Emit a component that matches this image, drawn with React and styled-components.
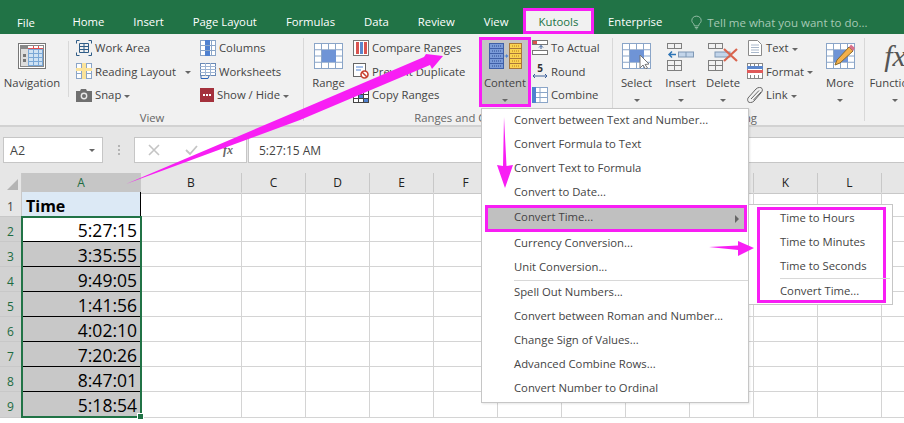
import React from "react";
import styled, { createGlobalStyle } from "styled-components";

const Global = createGlobalStyle`
  html, body { margin: 0; padding: 0; background: #fff; }
  body { font-family: "Open Sans", "Noto Sans", sans-serif; }
  * { box-sizing: border-box; }
`;
const MAG = "#f81ef4";
const Page = styled.div`
  position: relative; width: 904px; height: 423px; overflow: hidden;
  font-size: 11.3px; color: #444; background: #fff;
`;
const TabBar = styled.div`
  height: 34px; background: #217346; display: flex; align-items: flex-end; color: #fff; white-space: nowrap;
`;
const Tab = styled.div`
  height: 26px; line-height: 28px; padding: 0 ${p => p.$pad ?? 14.5}px; font-size: 11.3px; flex: none;
  width: ${p => p.$w ? `${p.$w}px` : "auto"};
  ${p => p.$active && `background:#f1f1f1;color:#217346;outline:3px solid ${MAG};outline-offset:-3px;margin-right:14px;text-align:center;`}
`;
const FileTab = styled(Tab)` padding: 0 23px 0 17px; line-height: 30px; `;
const TellMe = styled.div`
  display: flex; align-items: center; gap: 5px; height: 26px; margin-left: 29px; color: #a6c9b5; font-size: 11.5px; padding-top: 2px;
`;
const Ribbon = styled.div`
  height: 93px; background: #f1f1f1; border-bottom: 2px solid #d2d2d2; display: flex;
`;
const Group = styled.div`
  position: relative; flex: none; width: ${p => p.$w}px; height: 91px; display: flex; flex-direction: column;
  &::after { content: ""; position: absolute; right: 0; top: 4px; height: 83px; width: 1px; background: ${p => p.$noline ? "transparent" : "#d8d8d8"}; }
`;
const GroupBody = styled.div`
  height: 76px; padding-top: 3px; display: flex; flex: none;
`;
const GroupLabel = styled.div`
  text-align: center; font-size: 11.3px; line-height: 15px; color: #666; white-space: nowrap;
`;
const Large = styled.div`
  flex: none; width: ${p => p.$w}px; height: 70px; display: flex; flex-direction: column; align-items: center; position: relative;
  margin-right: ${p => p.$mr ?? 0}px; white-space: nowrap; color: #444;
  ${p => p.$hot && `background:#c4c4c4;outline:3px solid ${MAG};outline-offset:-3px;`}
`;
const LargeIcon = styled.div`
  height: 34px; padding-top: 6px; display: flex; justify-content: center; align-items: flex-start;
`;
const LargeText = styled.div` line-height: 24px; height: 24px; `;
const Caret = styled.span`
  display: inline-block; width: 0; height: 0; border-left: 3px solid transparent; border-right: 3px solid transparent; border-top: 3px solid #666;
  margin-left: ${p => p.$ml ?? 3}px; vertical-align: middle;
`;
const LargeCaret = styled(Caret)` margin: 4px 0 0; `;
const Divider = styled.div` width: 1px; height: 56px; margin: 4px 7px 0 0; background: #d8d8d8; flex: none; `;
const Col = styled.div`
  flex: none; width: ${p => p.$w}px; display: flex; flex-direction: column; margin-top: -1px;
`;
const Small = styled.div`
  height: 23.5px; display: flex; align-items: center; gap: 3px; white-space: nowrap;
  svg { flex: none; }
`;
const FormulaBar = styled.div`
  height: 46px; background: #e6e6e6; display: flex; padding: 10px 0 10px 3px; align-items: stretch;
`;
const NameBox = styled.div`
  width: 100px; background: #fff; border: 1px solid #c6c6c6; display: flex; align-items: center; justify-content: space-between;
  padding: 0 7px 0 6px; font-size: 12.5px; color: #444;
`;
const Dots = styled.div`
  width: 31px; display: flex; flex-direction: column; align-items: center; justify-content: center; gap: 2px;
  i { width: 2px; height: 2px; background: #b4b4b4; display: block; }
`;
const FxBox = styled.div`
  width: 113px; background: #fff; border: 1px solid #c6c6c6; display: flex; align-items: center; gap: 25px; padding: 0 0 0 13px;
  color: #666; font-family: "Liberation Serif", serif; font-style: italic; font-weight: 700; font-size: 12px; margin-right: 1px;
`;
const FormulaInput = styled.div`
  flex: 1; background: #fff; border: 1px solid #c6c6c6; border-right: 0; padding-left: 10px; line-height: 26px; font-size: 12px; color: #444;
`;
const Sheet = styled.div` position: relative; `;
const columns = "22px 119px 101px repeat(11, 64px)";
const ColHeaders = styled.div`
  display: grid; grid-template-columns: ${columns}; height: 19px; background: #e6e6e6;
`;
const ColHead = styled.div`
  text-align: center; line-height: 19px; font-size: 12px; color: ${p => p.$on ? "#1d6b41" : "#222"};
  background: ${p => p.$on ? "#c6c6c6" : "#e6e6e6"}; border-right: 1px solid #c8c8c8;
  border-bottom: ${p => p.$on ? "2px solid #217346" : "1px solid #c8c8c8"};
`;
const Corner = styled.div`
  border-right: 1px solid #c8c8c8; border-bottom: 1px solid #c8c8c8; position: relative; background: #e6e6e6;
  &::after { content: ""; position: absolute; right: 3px; bottom: 3px; border-left: 11px solid transparent; border-bottom: 11px solid #b4b4b4; }
`;
const Rows = styled.div` position: relative; `;
const Row = styled.div`
  display: grid; grid-template-columns: ${columns}; grid-template-rows: ${p => p.$h}px; height: ${p => p.$h}px;
`;
const RowHead = styled.div`
  text-align: center; line-height: 29px; height: 100%; overflow: hidden; font-size: 12px; color: ${p => p.$on ? "#1d6b41" : "#444"};
  background: ${p => p.$on ? "#d2d2d2" : "#e6e6e6"}; border-right: 1px solid #c8c8c8; border-bottom: 1px solid #c8c8c8;
`;
const Cell = styled.div`
  border-right: 1px solid #d4d4d4; border-bottom: 1px solid #d4d4d4;
`;
const DataCell = styled.div`
  background: ${p => p.$bg}; border-right: 1px solid #000; border-bottom: 1px solid #000; overflow: hidden;
  font-size: ${p => p.$head ? 16 : 17.5}px; line-height: 21px; color: #000; white-space: nowrap;
  text-align: ${p => p.$head ? "left" : "right"}; font-weight: ${p => p.$head ? 700 : 400};
  padding: ${p => p.$head ? "4px 0 0 4px" : "3px 3px 0 0"};
`;
const Selection = styled.div`
  position: absolute; left: 21px; top: 24px; width: 121px; height: 202px; border: 2px solid #217346; pointer-events: none;
`;
const Handle = styled.div`
  position: absolute; right: -4px; bottom: -4px; width: 7px; height: 7px; background: #217346; border: 1px solid #fff;
`;
const Menu = styled.div`
  position: absolute; left: 481px; top: 108px; width: 268px; height: 295px; background: #fff; border: 1px solid #c6c6c6; z-index: 3;
  box-shadow: 1px 1px 2px rgba(0,0,0,.1);
`;
const MenuItem = styled.div`
  height: ${p => p.$hot ? 27 : 24}px; line-height: ${p => p.$hot ? 24 : 22}px; padding-left: ${p => p.$hot ? 29 : 32}px; white-space: nowrap; color: #444; position: relative;
  ${p => p.$hot && `margin: 0 1px 0 3px; background:#c0c0c0; outline:3px solid ${MAG}; outline-offset:-3px;`}
`;
const SubArrow = styled.span`
  position: absolute; right: 8px; top: 10px; border-left: 4px solid #666; border-top: 4px solid transparent; border-bottom: 4px solid transparent;
`;
const MenuSep = styled.div` height: 1px; margin: 0 0 0 32px; background: #d8d8d8; `;
const SubMenu = styled.div`
  position: absolute; left: 748px; top: 204px; width: 145px; height: 101px; background: #fff; border: 1px solid #c6c6c6; z-index: 3; padding: 2px 0 0 8px;
`;
const SubFrame = styled.div` border: 3px solid ${MAG}; width: 129px; height: 96px; `;
const SubList = styled.div` margin-top: -4px; `;
const SubItem = styled.div` height: 24px; line-height: 24px; padding-left: 20px; white-space: nowrap; color: #444; `;
const SubSep = styled.div` height: 1px; margin-left: 20px; background: #d8d8d8; width: 110px; `;
const Overlay = styled.svg` position: absolute; left: 0; top: 0; z-index: 5; pointer-events: none; `;

const B = "#8aa5c8"; const G = "#7f7f7f";
const Cells = ({ w, h, nx, ny, stroke = B, fill = "#fff", children }) => {
  const l = [];
  for (let i = 0; i <= nx; i++) { const x = .5 + (i * (w - 1)) / nx; l.push(<path key={"x" + i} d={`M${x} 0V${h}`} />); }
  for (let i = 0; i <= ny; i++) { const y = .5 + (i * (h - 1)) / ny; l.push(<path key={"y" + i} d={`M0 ${y}H${w}`} />); }
  return <svg width={w} height={h} viewBox={`0 0 ${w} ${h}`}><rect width={w} height={h} fill={fill} /><g stroke={stroke} strokeWidth="1">{l}</g>{children}</svg>;
};
const NavIcon = () => (
  <svg width="28" height="26" viewBox="0 0 28 26">
    <rect x=".5" y=".5" width="27" height="25" fill="#fff" stroke="#777" />
    <rect x="2.500" y="2.500" width="23" height="21" fill="#fff" stroke="#888" />
    <rect x="3" y="3" width="7" height="20" fill="#ddd" /><rect x="3" y="3" width="7" height="3" fill="#888" />
    <rect x="10.500" y="6.500" width="14" height="16" fill="#cfe2f3" stroke="#7aa7d6" />
    <path d="M10 10.500H25M10 14.500H25M10 18.500H25M15.500 6V23M20.500 6V23" stroke="#7aa7d6" />
    <path d="M10 5.500H25M15.500 3V6M20.500 3V6" stroke="#e05050" />
    <rect x="5" y="11" width="3" height="3" fill="#777" /><rect x="5" y="16" width="3" height="3" fill="#777" />
  </svg>
);
const WorkArea = () => (
  <svg width="16" height="16" viewBox="0 0 16 16"><path d="M.5 3.500V.5H3.500M12.500.5H15.500V3.500M.5 12.500V15.500H3.500M12.500 15.500H15.500V12.500" stroke="#2f5c87" fill="none" />
    <path d="M3.500 3.500H12.500V12.500H3.500ZM3.500 6.500H12.500M3.500 9.500H12.500M8 3.500V12.500" stroke="#2f5c87" fill="none" /></svg>
);
const Reading = () => (
  <Cells w={16} h={16} nx={3} ny={3} fill="#fdfdfd"><rect x="0" y="5" width="16" height="3" fill="#fbe39a" /><rect x="6" y="0" width="4" height="16" fill="#fbe39a" /></Cells>
);
const Camera = () => (
  <svg width="16" height="14" viewBox="0 0 16 14"><path d="M0 3H4L5 1H10L11 3H16V14H0Z" fill="#6f6f6f" /><circle cx="8" cy="8" r="3.400" fill="#e8e8e8" /><circle cx="8" cy="8" r="2" fill="#6f6f6f" /></svg>
);
const Columns = () => (
  <svg width="16" height="16" viewBox="0 0 16 16"><rect x=".5" y=".5" width="15" height="15" fill="#fff" stroke={B} /><rect x="5" y="0" width="5" height="16" fill="#4f81d0" /><path d="M0 5.500H16M0 10.500H16" stroke={B} /><path d="M11.500 0V16" stroke={B} /></svg>
);
const Worksheets = () => (
  <svg width="16" height="16" viewBox="0 0 16 16"><rect x=".5" y=".5" width="15" height="12" fill="#fff" stroke="#6a89b5" /><path d="M0 3.500H16M0 6.500H16M0 9.500H16M5.500 0V13M10.500 0V13" stroke="#9db4d3" /><path d="M1 13V15.500H8L9 13" stroke="#2c64b8" fill="none" /></svg>
);
const ShowHide = () => (
  <svg width="14" height="14" viewBox="0 0 14 14"><rect width="14" height="14" fill="#a4313c" /><rect x="3" y="6" width="2" height="2" fill="#fff" /><rect x="6" y="6" width="2" height="2" fill="#fff" /><rect x="9" y="6" width="2" height="2" fill="#fff" /></svg>
);
const RangeIcon = () => (
  <Cells w={29} h={26} nx={4} ny={4}><rect x="8" y="7" width="14" height="12" fill="#6f94d6" /></Cells>
);
const Compare = () => (
  <svg width="16" height="16" viewBox="0 0 16 16"><rect x=".5" y=".5" width="15" height="15" fill="#fff" stroke="#777" /><rect x="3" y="2" width="3" height="12" fill="#d9534f" /><rect x="7" y="2" width="3" height="12" fill="#5b86cc" /><rect x="11" y="2" width="3" height="12" fill="#d9534f" /></svg>
);
const Prevent = () => (
  <svg width="16" height="16" viewBox="0 0 16 16"><rect x=".5" y=".5" width="12" height="13" fill="#fff" stroke="#666" /><path d="M3 4H10M3 7H8" stroke="#4f81d0" /><circle cx="11.500" cy="11.500" r="3.500" fill="#fff" stroke="#c8402f" strokeWidth="1.600" /><path d="M9 9L14 14" stroke="#c8402f" strokeWidth="1.500" /></svg>
);
const CopyR = () => (
  <svg width="16" height="16" viewBox="0 0 16 16"><rect x=".5" y="3.500" width="15" height="12" fill="#fff" stroke="#444" /><path d="M0 7.500H16M0 11.500H16M5.500 3V16M10.500 3V16" stroke="#444" /><rect x="6" y="8" width="4" height="3" fill="#4f81d0" /><rect x="11" y="12" width="4" height="3" fill="#4f81d0" /><path d="M3 4L5 6L9 1" stroke="#2a6fbf" fill="none" strokeWidth="1.400" /></svg>
);
const ContentIcon = () => (
  <svg width="33" height="26" viewBox="0 0 33 26">
    {[0, 5, 10, 15, 20].map(y => <g key={"a" + y}><rect x=".5" y={y + .5} width="14" height="5" fill="#7a9ad8" stroke="#3f5fa8" /><path d={`M3 ${y + 3}H12`} stroke="#2f4d92" strokeDasharray="1 1" /></g>)}
    {[0, 5, 10, 15, 20].map(y => <g key={"b" + y}><rect x="20.500" y={y + .5} width="12" height="5" fill="#fbd350" stroke="#a8763a" /><path d={`M23 ${y + 3}H31`} stroke="#b57a20" strokeDasharray="1 1" /></g>)}
    <path d="M15.500 13H18" stroke="#4f81d0" /><path d="M17 11V15L19.500 13Z" fill="#4f81d0" />
  </svg>
);
const ToActual = () => (
  <svg width="16" height="16" viewBox="0 0 16 16"><rect x=".5" y=".5" width="15" height="4" fill="#fff" stroke="#777" /><rect x="1" y="1" width="4" height="3" fill="#d9534f" /><rect x=".5" y="10.500" width="15" height="4" fill="#fff" stroke="#777" /><path d="M9 5.500V9M7 7.500L9 5.500L11 7.500" stroke="#3a5f9a" fill="none" /></svg>
);
const Round = () => (
  <svg width="16" height="16" viewBox="0 0 16 16"><text x="8" y="9" fontSize="10" fontWeight="700" textAnchor="middle" fill="#333" fontFamily="Open Sans">5</text><path d="M1 13H15M1 13L3 11M1 13L3 15M15 13L13 11M15 13L13 15" stroke="#3a5f9a" fill="none" /></svg>
);
const Combine = () => (
  <Cells w={16} h={16} nx={2} ny={3} fill="#fff"><rect x="0" y="0" width="4" height="16" fill="#4f81d0" /></Cells>
);
const SelectIcon = () => (
  <Cells w={29} h={26} nx={4} ny={4}><rect x="8" y="7" width="14" height="12" fill="#6f94d6" />
    <path d="M18 12V25L21 22L23.500 26L25.500 25L23 21.500L27 21Z" fill="#fff" stroke="#777" /></Cells>
);
const InsertIcon = () => (
  <svg width="28" height="28" viewBox="0 0 28 28" fill="none" stroke={G}>
    <rect x=".5" y=".5" width="14" height="5" /><path d="M7.500 0V6" />
    <rect x=".5" y="17.500" width="14" height="10" /><path d="M0 22.500H15M7.500 17V28" />
    <rect x="11.500" y="9" width="15" height="5" fill="#c3d5ea" stroke="#7f98b5" /><path d="M19 9V14" stroke="#7f98b5" />
    <path d="M9 11.500H2M5 8.500L2 11.500L5 14.500" stroke="#2e75b6" strokeWidth="1.500" />
  </svg>
);
const DeleteIcon = () => (
  <svg width="30" height="28" viewBox="0 0 30 28" fill="none" stroke={G}>
    <rect x=".5" y=".5" width="14" height="5" /><path d="M7.500 0V6" />
    <rect x=".5" y="17.500" width="14" height="10" /><path d="M0 22.500H15M7.500 17V28" />
    <rect x="7" y="9" width="15" height="5" fill="#c3d5ea" stroke="#7f98b5" />
    <path d="M16 6L29 18M29 6L16 18" stroke="#d9654f" strokeWidth="2.200" />
  </svg>
);
const TextIcon = () => (
  <svg width="16" height="16" viewBox="0 0 16 16" fill="#fff" stroke="#8a8a8a"><path d="M1.500.5H10.500L14.500 4.500V15.500H1.500Z" /><path d="M4 5H12M4 7.500H12M4 10H12M4 12.500H12" stroke="#a9b8cb" /></svg>
);
const FormatIcon = () => (
  <svg width="16" height="16" viewBox="0 0 16 16"><rect x=".5" y=".5" width="15" height="15" fill="#fff" stroke="#888" /><path d="M3.500 0V3M7.500 0V3M11.500 0V3M3.500 12V16M7.500 12V16M11.500 12V16" stroke="#888" /><rect x="0" y="3" width="16" height="3" fill="#5b86cc" /><rect x="0" y="7" width="16" height="3" fill="#e05a5a" /></svg>
);
const LinkIcon = () => (
  <svg width="16" height="16" viewBox="0 0 16 16" fill="none" stroke="#666"><path d="M1 11L9 2C11 0 14 0 15 1.500C16 3 15 5 13 7L7 14C5 16 2 16 1 14.500C.5 13.500.5 12 1 11Z" /><path d="M4 12L12 3.500M6.500 13L14 5" /></svg>
);
const MoreIcon = () => (
  <Cells w={29} h={26} nx={4} ny={4}><rect x="8" y="7" width="14" height="12" fill="#6f94d6" />
    <path d="M9 22L11 17L23 4L27 8L14 20Z" fill="#f3b04a" stroke="#8a6a2a" /><path d="M23 4L25 1.500L29 5L27 8Z" fill="#d9708a" /></Cells>
);
const FxBig = styled.div`
  font-family: "Liberation Serif", serif; font-style: italic; font-size: 30px; line-height: 26px; color: #555;
`;
const Bulb = () => (
  <svg width="11" height="15" viewBox="0 0 13 16" fill="none" stroke="#a6c9b5"><path d="M3.500 10C1.500 8.500 1 7 1 5.500C1 2.500 3.500.5 6.500.5C9.500.5 12 2.500 12 5.500C12 7 11.500 8.500 9.500 10L9 12H4Z" /><path d="M4.500 14H8.500M5.500 15.500H7.500" /></svg>
);

const tabs = ["Home", "Insert", "Page Layout", "Formulas", "Data", "Review", "View"];
const times = ["5:27:15", "3:35:55", "9:49:05", "1:41:56", "4:02:10", "7:20:26", "8:47:01", "5:18:54"];
const letters = ["A", "B", "C", "D", "E", "F", "G", "H", "I", "J", "K", "L", "M"];
const blanks = Array.from({ length: 12 });

const Big = ({ w, mr, icon, text, caret, hot }) => (
  <Large $w={w} $mr={mr} $hot={hot}>
    <LargeIcon>{icon}</LargeIcon>
    <LargeText>{text}</LargeText>
    {caret && <LargeCaret />}
  </Large>
);
const Sm = ({ icon, text, caret, ml }) => <Small>{icon}<span>{text}{caret && <Caret $ml={ml} />}</span></Small>;

export default function App() {
  return (
    <Page>
      <Global />
      <TabBar>
        <FileTab>File</FileTab>
        {tabs.map(t => <Tab key={t}>{t}</Tab>)}
        <Tab $active $pad={0} $w={71}>Kutools</Tab>
        <Tab $pad={0}>Enterprise</Tab>
        <TellMe><Bulb />Tell me what you want to do...</TellMe>
      </TabBar>
      <Ribbon>
        <Group $w={304}>
          <GroupBody>
            <Big w={64} mr={4} icon={<NavIcon />} text="Navigation" />
            <Divider />
            <Col $w={124}>
              <Sm icon={<WorkArea />} text="Work Area" />
              <Sm icon={<Reading />} text="Reading Layout" caret ml={9} />
              <Sm icon={<Camera />} text="Snap" caret />
            </Col>
            <Col $w={100}>
              <Sm icon={<Columns />} text="Columns" />
              <Sm icon={<Worksheets />} text="Worksheets" />
              <Sm icon={<ShowHide />} text="Show / Hide" caret />
            </Col>
          </GroupBody>
          <GroupLabel>View</GroupLabel>
        </Group>
        <Group $w={309}>
          <GroupBody>
            <Big w={49} icon={<RangeIcon />} text="Range" caret />
            <Col $w={126}>
              <Sm icon={<Compare />} text="Compare Ranges" />
              <Sm icon={<Prevent />} text="Prevent Duplicate" />
              <Sm icon={<CopyR />} text="Copy Ranges" />
            </Col>
            <Big w={52} mr={1} hot icon={<ContentIcon />} text="Content" caret />
            <Col $w={78}>
              <Sm icon={<ToActual />} text="To Actual" />
              <Sm icon={<Round />} text="Round" />
              <Sm icon={<Combine />} text="Combine" />
            </Col>
          </GroupBody>
          <GroupLabel>Ranges and Cells</GroupLabel>
        </Group>
        <Group $w={252}>
          <GroupBody>
            <Big w={47} icon={<SelectIcon />} text="Select" caret />
            <Big w={41} icon={<InsertIcon />} text="Insert" caret />
            <Big w={44} mr={2} icon={<DeleteIcon />} text="Delete" caret />
            <Col $w={72}>
              <Sm icon={<TextIcon />} text="Text" caret />
              <Sm icon={<FormatIcon />} text="Format" caret />
              <Sm icon={<LinkIcon />} text="Link" caret />
            </Col>
            <Big w={42} icon={<MoreIcon />} text="More" caret />
          </GroupBody>
          <GroupLabel>Editing</GroupLabel>
        </Group>
        <Group $w={60} $noline>
          <GroupBody>
            <Big w={60} icon={<FxBig>fx</FxBig>} text="Functions" caret />
          </GroupBody>
        </Group>
      </Ribbon>
      <FormulaBar>
        <NameBox>A2<Caret /></NameBox>
        <Dots><i /><i /><i /></Dots>
        <FxBox>
          <svg width="12" height="12" viewBox="0 0 12 12" stroke="#c4c4c4" strokeWidth="1.600"><path d="M1 1L11 11M11 1L1 11" /></svg>
          <svg width="13" height="12" viewBox="0 0 13 12" stroke="#c4c4c4" strokeWidth="1.800" fill="none"><path d="M1 6L5 10L12 2" /></svg>
          <span>fx</span>
        </FxBox>
        <FormulaInput>5:27:15 AM</FormulaInput>
      </FormulaBar>
      <Sheet>
        <ColHeaders>
          <Corner />
          {letters.map(l => <ColHead key={l} $on={l === "A"}>{l}</ColHead>)}
        </ColHeaders>
        <Rows>
          <Row $h={25}>
            <RowHead>1</RowHead>
            <DataCell $head $bg="#dce9f5">Time</DataCell>
            {blanks.map((_, i) => <Cell key={i} />)}
          </Row>
          {times.map((t, i) => (
            <Row key={t} $h={i === 7 ? 26 : 25}>
              <RowHead $on>{i + 2}</RowHead>
              <DataCell $bg={i === 0 ? "#fff" : "#c8c8c8"}>{t}</DataCell>
              {blanks.map((_, j) => <Cell key={j} />)}
            </Row>
          ))}
          <Selection><Handle /></Selection>
        </Rows>
      </Sheet>
      <Menu>
        {["Convert between Text and Number...", "Convert Formula to Text", "Convert Text to Formula", "Convert to Date..."].map(t => <MenuItem key={t}>{t}</MenuItem>)}
        <MenuItem $hot>Convert Time...<SubArrow /></MenuItem>
        <MenuItem>Currency Conversion...</MenuItem>
        <MenuItem>Unit Conversion...</MenuItem>
        <MenuSep />
        {["Spell Out Numbers...", "Convert between Roman and Number...", "Change Sign of Values...", "Advanced Combine Rows...", "Convert Number to Ordinal"].map(t => <MenuItem key={t}>{t}</MenuItem>)}
      </Menu>
      <SubMenu>
        <SubFrame>
          <SubList>
            <SubItem>Time to Hours</SubItem>
            <SubItem>Time to Minutes</SubItem>
            <SubItem>Time to Seconds</SubItem>
            <SubSep />
            <SubItem>Convert Time...</SubItem>
          </SubList>
        </SubFrame>
      </SubMenu>
      <Overlay width="904" height="423" viewBox="0 0 904 423">
        <path d="M126 184L300 110L424 57L426 54L443 56L432 69L430 65L300 120Z" fill={MAG} />
        <path d="M504 117L506.500 166L513 165L505 188L497 165L503 166Z" fill={MAG} />
        <path d="M709 247L738 245.500V241L754 248L738 256V250Z" fill={MAG} />
      </Overlay>
    </Page>
  );
}
